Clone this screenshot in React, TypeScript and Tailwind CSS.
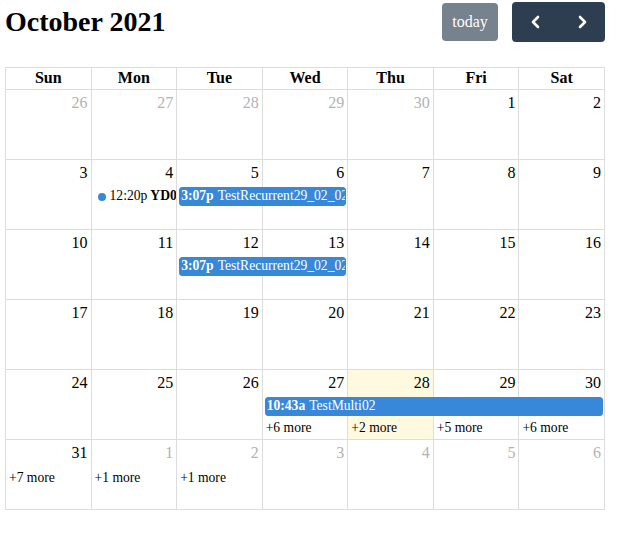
import React from 'react';

type Day = { n: number; muted?: boolean; today?: boolean };

const weeks: Day[][] = [
  [{ n: 26, muted: true }, { n: 27, muted: true }, { n: 28, muted: true }, { n: 29, muted: true }, { n: 30, muted: true }, { n: 1 }, { n: 2 }],
  [{ n: 3 }, { n: 4 }, { n: 5 }, { n: 6 }, { n: 7 }, { n: 8 }, { n: 9 }],
  [{ n: 10 }, { n: 11 }, { n: 12 }, { n: 13 }, { n: 14 }, { n: 15 }, { n: 16 }],
  [{ n: 17 }, { n: 18 }, { n: 19 }, { n: 20 }, { n: 21 }, { n: 22 }, { n: 23 }],
  [{ n: 24 }, { n: 25 }, { n: 26 }, { n: 27 }, { n: 28, today: true }, { n: 29 }, { n: 30 }],
  [{ n: 31 }, { n: 1, muted: true }, { n: 2, muted: true }, { n: 3, muted: true }, { n: 4, muted: true }, { n: 5, muted: true }, { n: 6, muted: true }],
];

const colStart = ['col-start-1', 'col-start-2', 'col-start-3', 'col-start-4', 'col-start-5', 'col-start-6', 'col-start-7'];

const BarEvent = ({ className, time, title }: { className: string; time: string; title: string }) => (
  <div className={`${className} row-start-2 mt-[1px] mx-[2px] h-[19px] bg-[#3788d8] border border-[#3788d8] rounded-[3px] text-white text-[13.6px] leading-[16px] px-[1px] overflow-hidden whitespace-nowrap`}>
    <span className="font-bold mr-[4px]">{time}</span>
    <span>{title}</span>
  </div>
);

const More = ({ col, row, label }: { col: number; row: 2 | 3; label: string }) => (
  <div className={`${colStart[col]} ${row === 2 ? 'row-start-2' : 'row-start-3'} ml-[3px] mt-[4px] text-[13.6px] leading-[16px] text-black whitespace-nowrap`}>
    {label}
  </div>
);

const Chevron = ({ dir }: { dir: 'l' | 'r' }) => (
  <svg width="12" height="16" viewBox="0 0 12 16" fill="none" stroke="white" strokeWidth="2.6" strokeLinecap="round" strokeLinejoin="round">
    {dir === 'l' ? <polyline points="8,3 3,8 8,13" /> : <polyline points="4,3 9,8 4,13" />}
  </svg>
);

export default function App() {
  return (
    <div className="font-['Liberation_Serif',serif] text-black bg-white w-[635px] h-[536px]">
      <div className="w-[600px] ml-[5px] pt-[2px]">
        {/* Toolbar */}
        <div className="flex items-center justify-between h-[40px] mb-[25px]">
          <h2 className="text-[28px] font-bold leading-none">October 2021</h2>
          <div className="flex items-center gap-[14px]">
            <button className="h-[38px] w-[56px] rounded-[4px] bg-[#76828d] text-white text-[16px]">today</button>
            <div className="flex h-[40px] rounded-[4px] overflow-hidden bg-[#2c3e50]">
              <button className="w-[47px] flex items-center justify-center"><Chevron dir="l" /></button>
              <button className="w-[46px] flex items-center justify-center"><Chevron dir="r" /></button>
            </div>
          </div>
        </div>

        {/* Calendar grid */}
        <div className="border-t border-l border-[#ddd]">
          <div className="grid grid-cols-7">
            {['Sun', 'Mon', 'Tue', 'Wed', 'Thu', 'Fri', 'Sat'].map((d) => (
              <div key={d} className="h-[22px] border-r border-b border-[#ddd] text-center font-bold text-[16px] leading-[20px]">
                {d}
              </div>
            ))}
          </div>

          {weeks.map((week, wi) => (
            <div key={wi} className="grid grid-cols-7 grid-rows-[26px_20px_20px_1fr] h-[70px]">
              {week.map((day, di) => (
                <div
                  key={`bg${di}`}
                  className={`${colStart[di]} row-start-1 row-end-5 border-r border-b border-[#ddd] ${day.today ? 'bg-[#fffadf]' : ''}`}
                />
              ))}
              {week.map((day, di) => (
                <div
                  key={`n${di}`}
                  className={`${colStart[di]} row-start-1 text-right pr-[4px] pt-[4px] text-[16px] leading-[18px] ${day.muted ? 'text-[#b3b3b3]' : 'text-black'}`}
                >
                  {day.n}
                </div>
              ))}

              {wi === 1 && (
                <>
                  <div className="col-start-2 row-start-2 mt-[1px] ml-[6px] mr-[1px] h-[19px] flex items-center overflow-hidden whitespace-nowrap text-[13.6px]">
                    <span className="w-[8px] h-[8px] rounded-full bg-[#3788d8] shrink-0 mr-[4px]" />
                    <span className="mr-[3px]">12:20p</span>
                    <span className="font-bold">YD0 Event</span>
                  </div>
                  <BarEvent className="col-start-3 col-span-2" time="3:07p" title="TestRecurrent29_02_02" />
                </>
              )}
              {wi === 2 && <BarEvent className="col-start-3 col-span-2" time="3:07p" title="TestRecurrent29_02_02" />}
              {wi === 4 && (
                <>
                  <BarEvent className="col-start-4 col-span-4" time="10:43a" title="TestMulti02" />
                  <More col={3} row={3} label="+6 more" />
                  <More col={4} row={3} label="+2 more" />
                  <More col={5} row={3} label="+5 more" />
                  <More col={6} row={3} label="+6 more" />
                </>
              )}
              {wi === 5 && (
                <>
                  <More col={0} row={2} label="+7 more" />
                  <More col={1} row={2} label="+1 more" />
                  <More col={2} row={2} label="+1 more" />
                </>
              )}
            </div>
          ))}
        </div>
      </div>
    </div>
  );
}
